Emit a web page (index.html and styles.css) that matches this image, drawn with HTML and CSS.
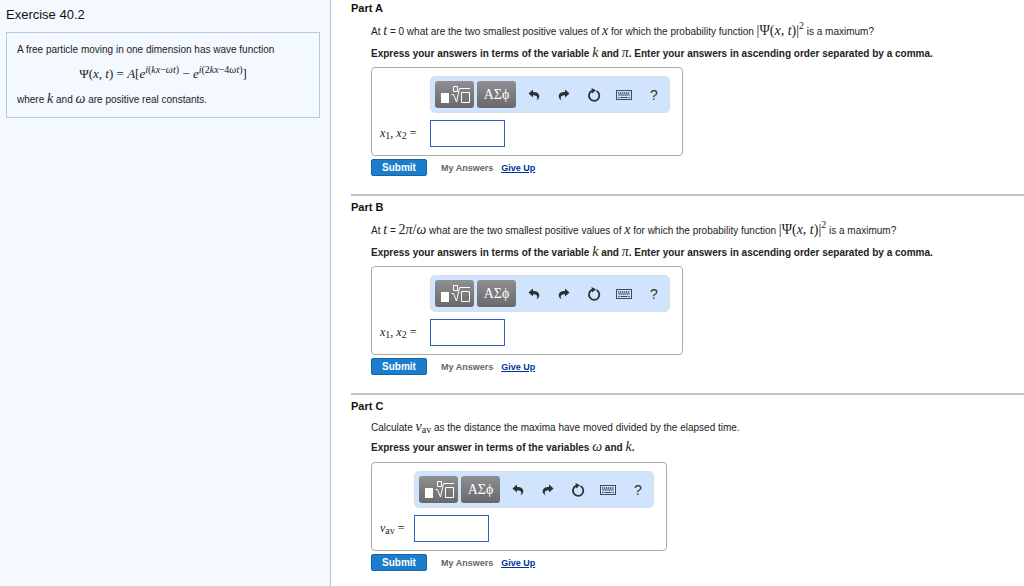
FILE: index.html
```
<!DOCTYPE html>
<html lang="en">
<head>
    <meta charset="UTF-8">
    <meta name="viewport" content="width=device-width, initial-scale=1.0">
    <title>Exercise 40.2</title>
    <link rel="stylesheet" href="styles.css">
</head>
<body>

    <!-- Shared icons -->
    <svg class="icon-defs" aria-hidden="true">
        <symbol id="icon-root" viewBox="0 0 30 18">
            <rect x="1" y="7" width="8" height="10" fill="#fff"/>
            <path d="M11.500 8.500h2l3 7.500L19.500 2.500H30M13.500 .5h4v5h-4zM21.500 6.500h8v10h-8z" fill="none" stroke="#fff"/>
        </symbol>
        <symbol id="icon-undo" viewBox="0 0 12 12">
            <path d="M5 .5L.5 4.500 5 8.500V6.200c2.700-.1 4.300.9 4.300 2.500 0 1-.4 1.800-.9 2.500 1.700-.7 2.900-2.100 2.900-4C11.300 4.300 8.900 2.900 5 2.900z"/>
        </symbol>
        <symbol id="icon-redo" viewBox="0 0 12 12">
            <path d="M7 .5l4.500 4L7 8.500V6.200c-2.700-.1-4.300.9-4.300 2.500 0 1 .4 1.800.9 2.500C1.900 10.500.7 9.100.7 7.200.7 4.300 3.100 2.900 7 2.900z"/>
        </symbol>
        <symbol id="icon-reset" viewBox="0 0 14 14">
            <path d="M9.500 3A5.200 5.200 0 1 1 5 2.900" fill="none" stroke="#2e3133" stroke-width="1.800"/>
            <path d="M4.500 0L9 2.300 5.200 5.500z"/>
        </symbol>
        <symbol id="icon-keyboard" viewBox="0 0 16 10">
            <rect x=".5" y=".5" width="15" height="9" fill="none" stroke="#3f4a56"/>
            <path d="M2 3h12M2.500 5h11" fill="none" stroke="#3f4a56" stroke-width="1.300" stroke-dasharray="1.300 .7"/>
            <path d="M2 7.500h1.500M4.500 7.500h7M12.500 7.500H14" fill="none" stroke="#3f4a56"/>
        </symbol>
    </svg>

    <div class="page">
        <aside class="sidebar">
            <h1>Exercise 40.2</h1>
            <div class="problem">
                <p>A free particle moving in one dimension has wave function</p>
                <p class="equation">Ψ(<i>x</i>, <i>t</i>) = <i>A</i>[<i>e</i><sup><i>i</i>(<i>kx</i>−<i>ωt</i>)</sup> − <i>e</i><sup><i>i</i>(2<i>kx</i>−4<i>ωt</i>)</sup>]</p>
                <p>where <i class="math">k</i> and <i class="math">ω</i> are positive real constants.</p>
            </div>
        </aside>

        <main class="parts">
            <!-- Part A -->
            <section class="part">
                <h2>Part A</h2>
                <div class="part-body">
                    <p>At <i class="math">t</i> = 0 what are the two smallest positive values of <i class="math">x</i> for which the probability function <span class="math">|Ψ(<i>x</i>, <i>t</i>)|<sup>2</sup></span> is a maximum?</p>
                    <p class="instructions">Express your answers in terms of the variable <i class="math">k</i> and <i class="math">π</i>. Enter your answers in ascending order separated by a comma.</p>
                    <div class="answer">
                        <div class="toolbar">
                            <button class="key" aria-label="Templates"><svg class="root"><use href="#icon-root"/></svg></button>
                            <button class="key">ΑΣϕ</button>
                            <button class="tool" aria-label="Undo"><svg width="12" height="12"><use href="#icon-undo"/></svg></button>
                            <button class="tool" aria-label="Redo"><svg width="12" height="12"><use href="#icon-redo"/></svg></button>
                            <button class="tool" aria-label="Reset"><svg width="14" height="14"><use href="#icon-reset"/></svg></button>
                            <button class="tool" aria-label="Keyboard"><svg width="16" height="10"><use href="#icon-keyboard"/></svg></button>
                            <button class="tool">?</button>
                        </div>
                        <label for="answerA"><i>x</i><sub>1</sub>, <i>x</i><sub>2</sub> =</label>
                        <input type="text" id="answerA">
                    </div>
                    <div class="actions">
                        <button class="submit">Submit</button>
                        <span class="my-answers">My Answers</span>
                        <a href="#">Give Up</a>
                    </div>
                </div>
            </section>

            <!-- Part B -->
            <section class="part">
                <h2>Part B</h2>
                <div class="part-body">
                    <p>At <i class="math">t</i> = <span class="math">2<i>π</i>/<i>ω</i></span> what are the two smallest positive values of <i class="math">x</i> for which the probability function <span class="math">|Ψ(<i>x</i>, <i>t</i>)|<sup>2</sup></span> is a maximum?</p>
                    <p class="instructions">Express your answers in terms of the variable <i class="math">k</i> and <i class="math">π</i>. Enter your answers in ascending order separated by a comma.</p>
                    <div class="answer">
                        <div class="toolbar">
                            <button class="key" aria-label="Templates"><svg class="root"><use href="#icon-root"/></svg></button>
                            <button class="key">ΑΣϕ</button>
                            <button class="tool" aria-label="Undo"><svg width="12" height="12"><use href="#icon-undo"/></svg></button>
                            <button class="tool" aria-label="Redo"><svg width="12" height="12"><use href="#icon-redo"/></svg></button>
                            <button class="tool" aria-label="Reset"><svg width="14" height="14"><use href="#icon-reset"/></svg></button>
                            <button class="tool" aria-label="Keyboard"><svg width="16" height="10"><use href="#icon-keyboard"/></svg></button>
                            <button class="tool">?</button>
                        </div>
                        <label for="answerB"><i>x</i><sub>1</sub>, <i>x</i><sub>2</sub> =</label>
                        <input type="text" id="answerB">
                    </div>
                    <div class="actions">
                        <button class="submit">Submit</button>
                        <span class="my-answers">My Answers</span>
                        <a href="#">Give Up</a>
                    </div>
                </div>
            </section>

            <!-- Part C -->
            <section class="part part-short">
                <h2>Part C</h2>
                <div class="part-body">
                    <p>Calculate <span class="math"><i>v</i><sub>av</sub></span> as the distance the maxima have moved divided by the elapsed time.</p>
                    <p class="instructions">Express your answer in terms of the variables <i class="math">ω</i> and <i class="math">k</i>.</p>
                    <div class="answer">
                        <div class="toolbar">
                            <button class="key" aria-label="Templates"><svg class="root"><use href="#icon-root"/></svg></button>
                            <button class="key">ΑΣϕ</button>
                            <button class="tool" aria-label="Undo"><svg width="12" height="12"><use href="#icon-undo"/></svg></button>
                            <button class="tool" aria-label="Redo"><svg width="12" height="12"><use href="#icon-redo"/></svg></button>
                            <button class="tool" aria-label="Reset"><svg width="14" height="14"><use href="#icon-reset"/></svg></button>
                            <button class="tool" aria-label="Keyboard"><svg width="16" height="10"><use href="#icon-keyboard"/></svg></button>
                            <button class="tool">?</button>
                        </div>
                        <label for="answerC"><i>v</i><sub>av</sub> =</label>
                        <input type="text" id="answerC">
                    </div>
                    <div class="actions">
                        <button class="submit">Submit</button>
                        <span class="my-answers">My Answers</span>
                        <a href="#">Give Up</a>
                    </div>
                </div>
            </section>
        </main>
    </div>

</body>
</html>
```
FILE: styles.css
```
* {
    box-sizing: border-box;
}
body {
    margin: 0;
    font-family: "Liberation Sans", Arial, sans-serif;
    font-size: 10px;
    color: #222;
    background: #fff;
}
h1, h2, p {
    margin: 0;
}
button {
    font-family: inherit;
    border: none;
    padding: 0;
    cursor: pointer;
}
sup, sub {
    line-height: 0;
}
.icon-defs {
    display: none;
}
.page {
    display: flex;
    min-height: 100vh;
}
/* Problem statement */
.sidebar {
    flex: 0 0 331px;
    padding: 7px 10px 6px 6px;
    background: #f4f9ff;
    border-right: 1px solid #a9c4da;
}
h1 {
    font-size: 13px;
    font-weight: normal;
    line-height: 16px;
    color: #111;
}
.problem {
    margin-top: 9px;
    padding: 7px 10px;
    border: 1px solid #b0cbe1;
}
.problem p {
    line-height: 20px;
}
.problem .equation {
    margin: 4px 0 6px;
    text-align: center;
    font-family: "Liberation Serif", serif;
    font-size: 13px;
}
.equation sup {
    font-size: 10px;
}
/* Math inside a sentence */
.math {
    font-family: "Liberation Serif", serif;
    font-size: 14px;
    font-weight: normal;
    line-height: 0;
}
.math sup, .math sub {
    font-size: 10px;
}
.math sub {
    vertical-align: -2px;
}
/* Parts */
.parts {
    flex: 1;
    min-width: 0;
    padding: 1px 0 0 20px;
}
.part {
    padding-bottom: 18px;
}
.part:last-child {
    padding-bottom: 0;
}
.part + .part {
    border-top: 2px solid #c4c4c4;
    padding-top: 4px;
}
h2 {
    font-size: 11px;
    line-height: 14px;
    color: #111;
}
.part-body {
    padding: 7px 0 0 20px;
}
.part p {
    line-height: 20px;
}
.instructions {
    margin-top: 2px;
    font-weight: bold;
}
/* Answer box */
.answer {
    display: grid;
    grid-template-columns: 50px 240px;
    gap: 7px 0;
    width: fit-content;
    margin-top: 3px;
    padding: 8px 12px 8px 8px;
    border: 1px solid #aaa;
    border-radius: 4px;
}
.toolbar {
    grid-column: 2;
    display: flex;
    align-items: center;
    height: 37px;
    padding-left: 4px;
    background: #d0e4fd;
    border: 1px solid #d8dee6;
    border-radius: 5px;
}
.key {
    width: 39px;
    height: 27px;
    margin-right: 3px;
    border-radius: 3px;
    background: linear-gradient(#8f8f92, #69696b);
    color: #fff;
    font-family: "Liberation Serif", serif;
    font-size: 14px;
}
.root {
    display: block;
    width: 30px;
    height: 18px;
    margin: 0 auto;
}
.tool {
    display: flex;
    align-items: center;
    justify-content: center;
    width: 30px;
    height: 26px;
    background: none;
    color: #2e3133;
    font-size: 14px;
}
.tool svg {
    fill: #2e3133;
}
.answer label {
    align-self: center;
    font-family: "Liberation Serif", serif;
    font-size: 12px;
}
.answer sub {
    font-size: 10px;
    vertical-align: -2px;
}
.answer input {
    width: 75px;
    height: 27px;
    padding: 2px 4px;
    border: 1px solid #2f62c4;
    font-size: 12px;
}
.actions {
    display: flex;
    align-items: center;
    margin-top: 3px;
    font-weight: bold;
    font-size: 9px;
}
.submit {
    width: 56px;
    height: 17px;
    margin-right: 14px;
    border: 1px solid #1565a5;
    border-radius: 2px;
    background: #1b7dcb;
    color: #fff;
    font-size: 10px;
    font-weight: bold;
}
.my-answers {
    margin-right: 8px;
    color: #666;
}
.actions a {
    color: #003399;
}
/* Part with a short answer label */
.part-short .part-body {
    padding-top: 5px;
}
.part-short .instructions {
    margin-top: 0;
}
.part-short .answer {
    grid-template-columns: 34px 240px;
    margin-top: 4px;
}
```
